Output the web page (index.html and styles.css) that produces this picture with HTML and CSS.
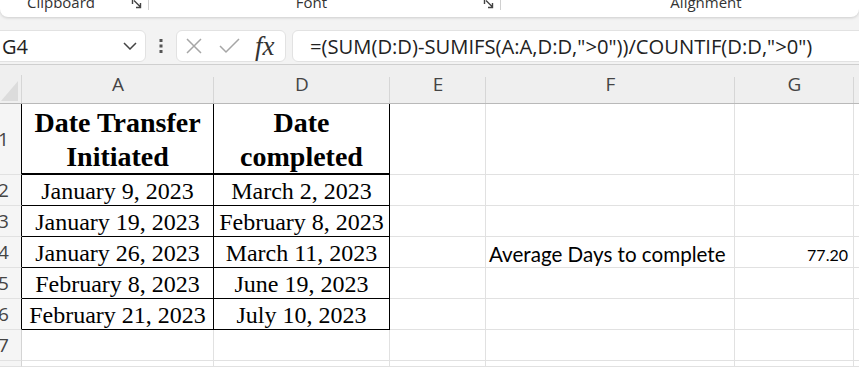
FILE: index.html
```html
<!DOCTYPE html>
<html lang="en">
<head>
    <meta charset="UTF-8">
    <title>Average Days to complete</title>
    <link rel="stylesheet" href="styles.css">
</head>
<body>
    <div class="ribbon">
        <div class="group g-clip">
            <span class="label">Clipboard</span>
            <span class="launch"><svg width="11" height="9" viewBox="0 0 11 9"><path d="M1.5 0V4M3 0.5L9 6.5M5 7.5H9.5V3" fill="none" stroke="#444" stroke-width="1.4"/></svg></span>
        </div>
        <div class="sep"></div>
        <div class="group g-font">
            <span class="label">Font</span>
            <span class="launch"><svg width="11" height="9" viewBox="0 0 11 9"><path d="M1.5 0V4M3 0.5L9 6.5M5 7.5H9.5V3" fill="none" stroke="#444" stroke-width="1.4"/></svg></span>
        </div>
        <div class="sep"></div>
        <div class="group g-align">
            <span class="label">Alignment</span>
        </div>
    </div>

    <div class="formula-bar">
        <div class="name-box">
            <span class="name">G4</span>
            <svg class="chev" width="14" height="8" viewBox="0 0 14 8"><path d="M1 1L7 7L13 1" fill="none" stroke="#444" stroke-width="1.5"/></svg>
        </div>
        <div class="dots">
            <svg width="4" height="16" viewBox="0 0 4 16"><rect x="0.5" y="1" width="3" height="3" fill="#555"/><rect x="0.5" y="6.5" width="3" height="3" fill="#555"/><rect x="0.5" y="12" width="3" height="3" fill="#555"/></svg>
        </div>
        <div class="fx-box">
            <svg width="16" height="16" viewBox="0 0 16 16"><path d="M1 1L15 15M15 1L1 15" stroke="#a6a6a6" stroke-width="1.5"/></svg>
            <svg class="check" width="21" height="16" viewBox="0 0 21 16"><path d="M1 8L7 14L20 1" fill="none" stroke="#a6a6a6" stroke-width="1.5"/></svg>
            <span class="fx">fx</span>
        </div>
        <div class="formula">=(SUM(D:D)-SUMIFS(A:A,D:D,"&gt;0"))/COUNTIF(D:D,"&gt;0")</div>
    </div>

    <div class="sheet">
        <div class="ch corner"><svg width="17" height="20" viewBox="0 0 17 20"><polygon points="17,0 17,20 0,20" fill="#dcdcdc"/></svg></div>
        <div class="ch">A</div>
        <div class="ch">D</div>
        <div class="ch">E</div>
        <div class="ch">F</div>
        <div class="ch">G</div>
        <div class="ch"></div>

        <div class="rh rb">1</div>
        <div class="c t th">Date Transfer Initiated</div>
        <div class="c t th">Date completed</div>
        <div class="c"></div><div class="c"></div><div class="c"></div><div class="c"></div>

        <div class="rh rb">2</div>
        <div class="c t">January 9, 2023</div>
        <div class="c t">March 2, 2023</div>
        <div class="c"></div><div class="c"></div><div class="c"></div><div class="c"></div>

        <div class="rh rb">3</div>
        <div class="c t">January 19, 2023</div>
        <div class="c t">February 8, 2023</div>
        <div class="c"></div><div class="c"></div><div class="c"></div><div class="c"></div>

        <div class="rh rb">4</div>
        <div class="c t">January 26, 2023</div>
        <div class="c t">March 11, 2023</div>
        <div class="c"></div>
        <div class="c txt">Average Days to complete</div>
        <div class="c num">77.20</div>
        <div class="c"></div>

        <div class="rh rb">5</div>
        <div class="c t">February 8, 2023</div>
        <div class="c t">June 19, 2023</div>
        <div class="c"></div><div class="c"></div><div class="c"></div><div class="c"></div>

        <div class="rh rb">6</div>
        <div class="c t">February 21, 2023</div>
        <div class="c t">July 10, 2023</div>
        <div class="c"></div><div class="c"></div><div class="c"></div><div class="c"></div>

        <div class="rh">7</div>
        <div class="c"></div><div class="c"></div><div class="c"></div><div class="c"></div><div class="c"></div><div class="c"></div>

        <div class="rh"></div>
        <div class="c"></div><div class="c"></div><div class="c"></div><div class="c"></div><div class="c"></div><div class="c"></div>
    </div>
</body>
</html>
```

FILE: styles.css
```css
body {
    margin: 0;
    width: 859px;
    height: 367px;
    overflow: hidden;
    background: #f3f3f3;
    font-family: "Open Sans", sans-serif;
    color: #222;
}

/* ribbon strip, only its bottom edge is in view */
.ribbon {
    height: 17px;
    background: #fff;
    border-radius: 0 0 8px 8px;
    box-shadow: 0 1px 3px rgba(0,0,0,0.16);
    display: flex;
    overflow: hidden;
}
.group {
    display: flex;
    flex-shrink: 0;
}
.g-clip { width: 148px; }
.g-font { width: 351px; }
.g-align { width: 410px; }
.label {
    flex: 1;
    text-align: center;
    font-size: 15px;
    line-height: 15px;
    margin-top: -5px;
    color: #333;
    white-space: nowrap;
}
.launch {
    width: 26px;
}
.launch svg { display: block; margin-left: 9px; }
.sep {
    width: 1px;
    height: 10px;
    flex-shrink: 0;
    background: #d0d0d0;
}

/* formula bar */
.formula-bar {
    height: 47px;
    box-sizing: border-box;
    padding-top: 13px;
    display: flex;
    align-items: flex-start;
}
.name-box {
    width: 154px;
    height: 32px;
    margin-left: -8px;
    box-sizing: border-box;
    background: #fff;
    border: 1px solid #e2e2e2;
    border-radius: 6px;
    display: flex;
    align-items: center;
    padding-left: 9px;
    padding-right: 8px;
}
.name {
    flex: 1;
    font-size: 20px;
}
.dots {
    width: 30px;
    height: 32px;
    display: flex;
    align-items: center;
    justify-content: center;
}
.fx-box {
    width: 110px;
    height: 32px;
    box-sizing: border-box;
    background: #fff;
    border: 1px solid #e2e2e2;
    border-radius: 6px;
    display: flex;
    align-items: center;
    padding-left: 9px;
}
.check { margin-left: 17px; }
.fx {
    margin-left: 15px;
    font-family: "Liberation Serif", serif;
    font-style: italic;
    font-size: 27px;
    line-height: 30px;
    color: #333;
}
.formula {
    flex: 1;
    height: 32px;
    margin-left: 6px;
    margin-right: -20px;
    box-sizing: border-box;
    background: #fff;
    border: 1px solid #e2e2e2;
    border-radius: 6px;
    padding-left: 17px;
    font-size: 20.2px;
    line-height: 30px;
    white-space: nowrap;
}

/* sheet grid */
.sheet {
    margin-left: -14px;
    display: grid;
    grid-template-columns: 36px 192px 176px 96px 249px 119px 40px;
    grid-template-rows: 40px 71px repeat(6, 31px) 6px;
    background: #fff;
}
.ch {
    box-sizing: border-box;
    background: #efefef linear-gradient(#d6d6d6, #d6d6d6) right bottom / 1px 26px no-repeat;
    border-top: 1px solid #cfcfcf;
    border-bottom: 1px solid #b9b9b9;
    display: flex;
    align-items: center;
    justify-content: center;
    font-size: 19px;
    color: #444;
}
.corner {
    justify-content: flex-end;
    align-items: flex-end;
    padding: 0 4px 2px 0;
    background-size: 1px 28px;
}
.corner svg { display: block; }
.rh {
    box-sizing: border-box;
    background: #f5f5f5;
    border-right: 1px solid #d4d4d4;
    border-bottom: 1px solid #e1e1e1;
    display: flex;
    align-items: center;
    justify-content: center;
    font-size: 19px;
    color: #444;
}
.rh.rb { border-right-color: #000; }
.c {
    box-sizing: border-box;
    border-right: 1px solid #e1e1e1;
    border-bottom: 1px solid #e1e1e1;
    display: flex;
    align-items: center;
    min-width: 0;
    white-space: nowrap;
}
.t {
    border-right-color: #000;
    border-bottom-color: #000;
    justify-content: center;
    font-family: "Liberation Serif", serif;
    font-size: 24px;
    line-height: 24px;
    padding-top: 1px;
    color: #000;
}
.th {
    border-bottom-width: 2px;
    align-items: flex-start;
    padding-top: 2px;
    font-weight: bold;
    font-size: 28px;
    line-height: 34px;
    text-align: center;
    white-space: normal;
}
.txt {
    padding: 3px 0 0 3px;
    font-family: Lato, sans-serif;
    font-size: 20.6px;
    color: #000;
}
.num {
    justify-content: flex-end;
    padding: 4px 5px 0 0;
    font-family: Lato, sans-serif;
    font-size: 16px;
    color: #000;
}
```
